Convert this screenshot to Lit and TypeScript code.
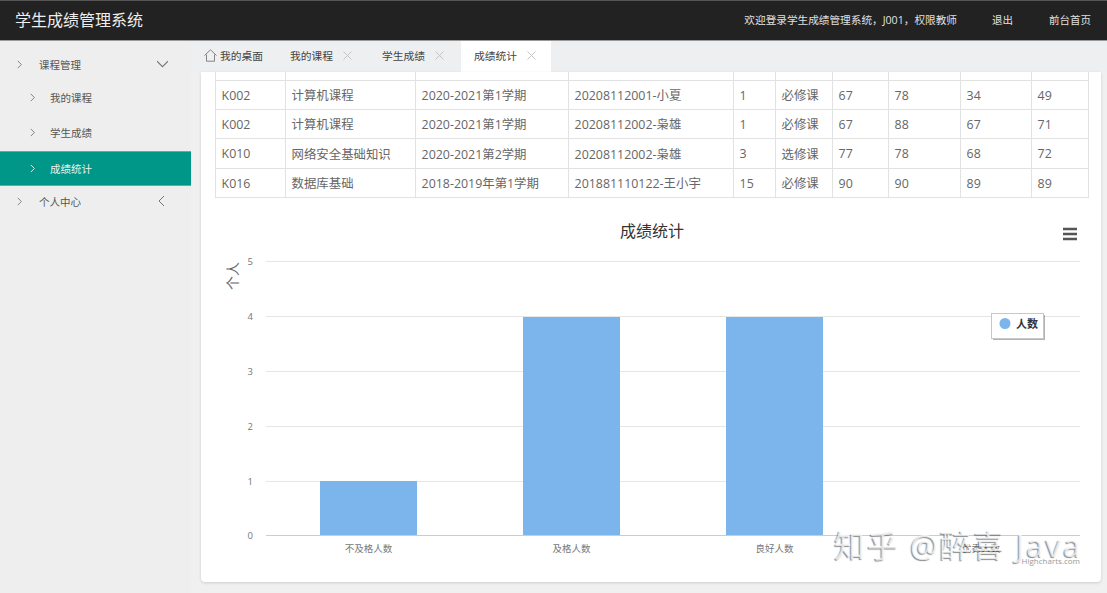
import { LitElement, html, css, svg } from 'lit';
import { customElement } from 'lit/decorators.js';

const rows = [
  ['K002', '计算机课程', '2020-2021第1学期', '20208112001-小夏', '1', '必修课', '80', '78', '67', '72'],
  ['K002', '计算机课程', '2020-2021第1学期', '20208112001-小夏', '1', '必修课', '67', '78', '34', '49'],
  ['K002', '计算机课程', '2020-2021第1学期', '20208112002-枭雄', '1', '必修课', '67', '88', '67', '71'],
  ['K010', '网络安全基础知识', '2020-2021第2学期', '20208112002-枭雄', '3', '选修课', '77', '78', '68', '72'],
  ['K016', '数据库基础', '2018-2019年第1学期', '201881110122-王小宇', '15', '必修课', '90', '90', '89', '89'],
];

const gridLines = [
  { y: 261, label: '5' },
  { y: 316, label: '4' },
  { y: 371, label: '3' },
  { y: 426, label: '2' },
  { y: 481, label: '1' },
  { y: 535, label: '0' },
];

const bars = [
  { x: 320, top: 481, label: '不及格人数' },
  { x: 523, top: 317, label: '及格人数' },
  { x: 726, top: 317, label: '良好人数' },
];

const chevron = (dir: string) => {
  const points: Record<string, string> = {
    right: '2,1 6,5 2,9',
    down: '0,2 5,7 10,2',
    left: '6,0 1,5 6,10',
  };
  return html`<svg class="chev chev-${dir}" viewBox="0 0 10 10">
    <polyline points=${points[dir]} fill="none" stroke="currentColor" stroke-width="1"></polyline>
  </svg>`;
};

const closeIcon = html`<svg class="close" viewBox="0 0 9 9">
  <path d="M0.5 0.5L8.5 8.5M8.5 0.5L0.5 8.5" stroke="#c4c4c4" stroke-width="1" fill="none"></path>
</svg>`;

@customElement('app-root')
export class AppRoot extends LitElement {
  static styles = css`
    :host {
      display: block;
      width: 1107px;
      height: 593px;
      overflow: hidden;
      position: relative;
      background: #f0f0f0;
      font-family: 'Open Sans', 'Noto Sans CJK SC', sans-serif;
    }
    .header {
      height: 39px;
      box-sizing: content-box;
      background: #222;
      border-top: 1px solid #555;
      color: #e0e0e0;
      display: flex;
      align-items: center;
      padding: 0 16px 0 15px;
      font-size: 10.5px;
    }
    .header > div {
      margin-top: -2px;
    }
    .header > .brand {
      margin-top: -4px;
      font-size: 16px;
      color: #eee;
      flex: 1;
    }
    .welcome {
      font-size: 10.65px;
      margin-right: 35px;
    }
    .quit {
      margin-right: 36px;
    }
    .body {
      display: flex;
      height: 553px;
      border-top: 1px solid #999;
    }
    .sidebar {
      width: 191px;
      flex: none;
      box-sizing: border-box;
      padding-top: 8px;
      background: #eeeeee;
      font-size: 10.5px;
      color: #555;
    }
    .menu-parent {
      height: 32px;
      box-sizing: border-box;
      display: flex;
      align-items: center;
      padding: 0 0 2px 16px;
    }
    .menu-child {
      height: 35px;
      box-sizing: border-box;
      display: flex;
      align-items: center;
      padding: 0 0 2px 29px;
    }
    .menu-child.active {
      padding-bottom: 0;
      background: #009688;
      color: #e8f5f3;
      border-top: 1px solid #4db6ac;
      border-bottom: 1px solid #4db6ac;
    }
    .chev {
      flex: none;
      width: 9px;
      height: 9px;
      color: #777;
    }
    .active .chev {
      color: #e8f5f3;
    }
    .menu-parent > span {
      margin-left: 14px;
      flex: 1;
    }
    .menu-child > span {
      margin-left: 12px;
    }
    .chev-down {
      width: 11px;
      height: 11px;
      margin-right: 23px;
    }
    .chev-left {
      width: 10px;
      height: 10px;
      margin-right: 23px;
    }
    .main {
      flex: 1;
      min-width: 0;
      display: flex;
      flex-direction: column;
    }
    .tabs {
      height: 31px;
      flex: none;
      display: flex;
      background: #eeeff0;
      font-size: 10.75px;
      color: #444;
    }
    .tab {
      display: flex;
      align-items: center;
      padding: 0 17px 2px 13px;
      gap: 10px;
    }
    .tab.home {
      gap: 3px;
      padding-right: 14px;
    }
    .tab.active {
      background: #fff;
      padding-right: 15px;
    }
    .close {
      width: 9px;
      height: 9px;
    }
    .home-icon {
      width: 13px;
      height: 13px;
    }
    .content {
      flex: 1;
      min-height: 0;
      padding: 0 6px 12px 10px;
    }
    .card {
      height: 100%;
      background: #fff;
      border-radius: 0 0 4px 4px;
      box-shadow: 0 1px 3px rgba(0, 0, 0, 0.15);
      overflow: hidden;
      padding: 0 13px 0 14px;
      box-sizing: border-box;
    }
    table {
      width: 873px;
      table-layout: fixed;
      border-collapse: collapse;
      margin-top: -21px;
      font-size: 12.4px;
      color: #666;
    }
    td {
      height: 29px;
      padding: 0 0 0 5.6px;
      border: 1px solid #e2e2e2;
      box-sizing: border-box;
      white-space: nowrap;
    }
    tr:nth-child(4) td {
      height: 30px;
    }
    .chart {
      display: block;
      margin: 12px 0 0 -14px;
    }
    .chart text {
      font-family: 'Open Sans', 'Noto Sans CJK SC', sans-serif;
    }
    .chart-title {
      font-size: 16px;
      fill: #333;
    }
    .axis-label {
      font-size: 9.5px;
      fill: #777;
    }
    .axis-title {
      font-size: 14px;
      fill: #666;
    }
    .legend-text {
      font-size: 11px;
      font-weight: 700;
      fill: #333;
    }
    .credits {
      font-size: 8px;
      fill: #999;
    }
    .watermark {
      position: absolute;
      left: 834px;
      top: 525px;
      font-size: 31px;
      letter-spacing: 2px;
      line-height: 40px;
      white-space: nowrap;
      color: rgba(255, 255, 255, 0.75);
      text-shadow: -1px 1px 1px rgba(0, 0, 0, 0.45);
    }
  `;

  private renderChart() {
    return svg`
      <text class="chart-title" x="652" y="237" text-anchor="middle">成绩统计</text>
      <path d="M1063 229H1077M1063 234H1077M1063 239H1077" stroke="#555" stroke-width="2.4" fill="none"></path>
      <text class="axis-title" x="0" y="0" text-anchor="middle"
        transform="translate(238 276) rotate(-90)">个人</text>
      ${gridLines.map(
        (g) => svg`
          <line x1="266" x2="1080" y1=${g.y + 0.5} y2=${g.y + 0.5}
            stroke=${g.y === 535 ? '#ccc' : '#e6e6e6'}></line>
          <text class="axis-label" x="253" y=${g.y + 4} text-anchor="end">${g.label}</text>
        `
      )}
      ${bars.map(
        (b) => svg`
          <rect x=${b.x} y=${b.top} width="97" height=${535 - b.top} fill="#7cb5ec"></rect>
          <text class="axis-label" x=${b.x + 48.5} y="552" text-anchor="middle">${b.label}</text>
        `
      )}
      <text class="axis-label" x="981" y="552" text-anchor="middle">优秀人数</text>
      <rect x="993" y="315" width="52" height="25" fill="#000" opacity="0.3"></rect>
      <rect x="991.5" y="313.5" width="52" height="25" fill="#fff" stroke="#c8c8c8"></rect>
      <circle cx="1005" cy="323.5" r="5.5" fill="#7cb5ec"></circle>
      <text class="legend-text" x="1016" y="328">人数</text>
      <text class="credits" x="1080" y="564" text-anchor="end">Highcharts.com</text>
    `;
  }

  render() {
    return html`
      <div class="header">
        <div class="brand">学生成绩管理系统</div>
        <div class="welcome">欢迎登录学生成绩管理系统，J001，权限教师</div>
        <div class="quit">退出</div>
        <div>前台首页</div>
      </div>
      <div class="body">
        <nav class="sidebar">
          <div class="menu-parent">${chevron('right')}<span>课程管理</span>${chevron('down')}</div>
          <div class="menu-child">${chevron('right')}<span>我的课程</span></div>
          <div class="menu-child">${chevron('right')}<span>学生成绩</span></div>
          <div class="menu-child active">${chevron('right')}<span>成绩统计</span></div>
          <div class="menu-parent">${chevron('right')}<span>个人中心</span>${chevron('left')}</div>
        </nav>
        <div class="main">
          <div class="tabs">
            <div class="tab home">
              <svg class="home-icon" viewBox="0 0 13 13">
                <path d="M0.5 6.5L6.5 0.8L12.5 6.5M2.5 5.5V12.2H10.5V5.5" fill="none" stroke="#777" stroke-width="0.9"></path>
              </svg>
              <span>我的桌面</span>
            </div>
            <div class="tab"><span>我的课程</span>${closeIcon}</div>
            <div class="tab"><span>学生成绩</span>${closeIcon}</div>
            <div class="tab active"><span>成绩统计</span>${closeIcon}</div>
          </div>
          <div class="content">
            <div class="card">
              <table>
                <colgroup>
                  ${[70, 130, 153, 165, 42, 57, 56, 72, 71, 57].map(
                    (w) => html`<col style="width:${w}px" />`
                  )}
                </colgroup>
                <tbody>
                  ${rows.map(
                    (r) => html`<tr>${r.map((c) => html`<td>${c}</td>`)}</tr>`
                  )}
                </tbody>
              </table>
              <svg class="chart" width="900" height="362" viewBox="201 210 900 362">
                ${this.renderChart()}
              </svg>
            </div>
          </div>
        </div>
      </div>
      <div class="watermark">知乎 @醉喜 Java</div>
    `;
  }
}
